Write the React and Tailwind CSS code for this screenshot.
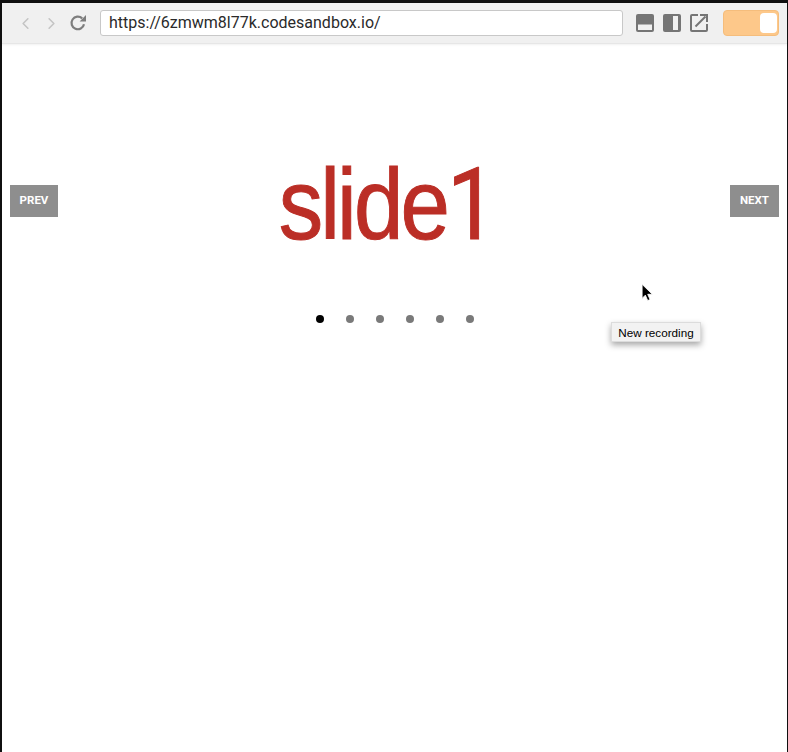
import React from 'react';
import { ChevronLeft, ChevronRight } from 'lucide-react';

const font = { sans: 'font-["Liberation_Sans",Arial,sans-serif]', roboto: 'font-["Roboto",sans-serif]' };

function ReloadIcon() {
  return (
    <svg width="18" height="18" viewBox="0 0 18 18" fill="none">
      <path d="M15 10.2A6.3 6.3 0 1 1 13.2 4.4" stroke="#7d7d7d" strokeWidth="2.2" />
      <path d="M10.6 7.4H17V1z" fill="#7d7d7d" />
    </svg>
  );
}

function BottomPaneIcon() {
  return (
    <svg width="18" height="18" viewBox="0 0 18 18">
      <rect width="18" height="18" rx="2" fill="#757575" />
      <rect x="2" y="10.5" width="14" height="5.5" fill="#f0f0f0" />
    </svg>
  );
}

function SidePaneIcon() {
  return (
    <svg width="18" height="18" viewBox="0 0 18 18">
      <rect width="18" height="18" rx="2" fill="#757575" />
      <rect x="10" y="2" width="5" height="14" fill="#f0f0f0" />
    </svg>
  );
}

function ExternalIcon() {
  return (
    <svg width="18" height="18" viewBox="0 0 18 18" fill="none" stroke="#757575" strokeWidth="2">
      <path d="M17 10v6a1 1 0 0 1-1 1H2a1 1 0 0 1-1-1V2a1 1 0 0 1 1-1h6" />
      <path d="M5.5 12.5 15.5 2.5" />
      <path d="M10 1h7v7" />
    </svg>
  );
}

function CursorIcon() {
  return (
    <svg width="13" height="20" viewBox="0 0 12 18">
      <path d="M1 1v13l3-3 2.2 5 2.2-1-2.2-4.8H10.500z" fill="#000" stroke="#fff" strokeWidth="0.8" />
    </svg>
  );
}

function SlideButton({ label, className }) {
  return (
    <button className={`h-8 bg-[#8e8e8e] text-white text-[11.5px] font-bold flex items-center justify-center ${font.roboto} ${className}`}>
      {label}
    </button>
  );
}

export default function App() {
  const dots = [0, 1, 2, 3, 4, 5];

  return (
    <div className="w-[788px] h-[752px] overflow-hidden bg-[#101010] pt-[3px] pl-[2px] pr-[1px]">
      <div className="h-full flex flex-col bg-white rounded-t-[3px] relative">
        {/* browser toolbar */}
        <div className="h-[41px] shrink-0 flex items-center bg-[#f0f0f0] border-b border-[#e6e6e6] shadow-[0_1px_2px_rgba(0,0,0,0.06)]">
          <ChevronLeft className="ml-[14px] text-[#c4c4c4]" size={19} strokeWidth={2} />
          <ChevronRight className="ml-[7px] text-[#c4c4c4]" size={19} strokeWidth={2} />
          <div className="ml-[8px]"><ReloadIcon /></div>
          <div className={`ml-[13px] w-[523px] h-[26px] bg-white border border-[#c8c8c8] rounded-[3px] flex items-center pl-2 text-[16px] text-[#2a2a2a] ${font.roboto}`}>
            https://6zmwm8l77k.codesandbox.io/
          </div>
          <div className="ml-[13px] flex gap-[9px]">
            <BottomPaneIcon />
            <SidePaneIcon />
            <ExternalIcon />
          </div>
          <div className="ml-[15px] w-[56px] h-[26px] rounded-[4px] bg-[#fdc88a] border border-[#f5bd7c] flex items-center justify-end pr-[1px]">
            <div className="w-[17px] h-[20px] rounded-[4px] bg-white" />
          </div>
        </div>

        {/* slider */}
        <div className="flex flex-col">
          <div className="mt-[102px] px-[8px] flex items-center justify-between h-[110px]">
            <SlideButton label="PREV" className="w-[48px]" />
            <div className={`text-[101px] leading-none tracking-[-3.3px] text-[#bb2e26] scale-x-[0.88] [-webkit-text-stroke:1px_#bb2e26] ml-[-15px] mt-[6px] ${font.sans}`}>
              slide<span className={font.roboto}>1</span>
            </div>
            <SlideButton label="NEXT" className="w-[49px]" />
          </div>
          <div className="mt-[59px] flex justify-center gap-[22px]">
            {dots.map((d) => (
              <span key={d} className={`w-2 h-2 rounded-full ${d === 0 ? 'bg-black' : 'bg-[#7a7a7a]'}`} />
            ))}
          </div>
        </div>

        {/* recording cursor + tooltip */}
        <div className="absolute left-[639px] top-[280px]"><CursorIcon /></div>
        <div className={`absolute left-[609px] top-[319px] w-[90px] h-[20px] pt-[1px] flex items-center justify-center bg-[#f2f2f2] text-[11.7px] text-black border border-[#dcdcdc] shadow-[0_3px_6px_rgba(0,0,0,0.35)] ${font.sans}`}>
          New recording
        </div>
      </div>
    </div>
  );
}
